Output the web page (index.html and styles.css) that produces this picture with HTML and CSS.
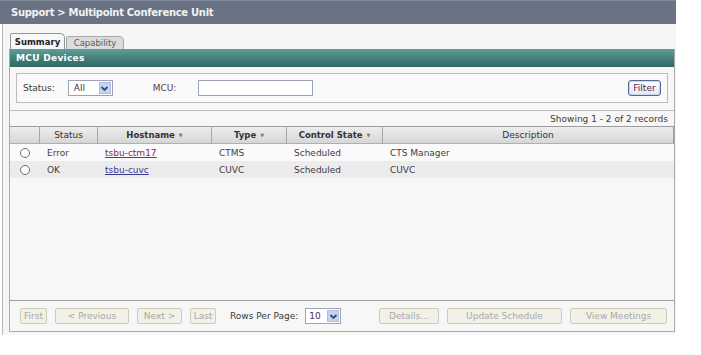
FILE: index.html
```html
<!DOCTYPE html>
<html>
<head>
<meta charset="utf-8">
<link rel="stylesheet" href="styles.css">
</head>
<body>
<div class="page">
  <div class="titlebar">Support &gt; Multipoint Conference Unit</div>
  <div class="content">
    <div class="tabs">
      <div class="tab active">Summary</div>
      <div class="tab">Capability</div>
    </div>
    <div class="panel">
      <div class="panel-head">MCU Devices</div>
      <div class="filter-wrap">
        <div class="filter">
          <span class="lbl">Status:</span>
          <div class="select status-sel"><span class="sel-text">All</span><span class="sel-btn"><svg width="9" height="7" viewBox="0 0 9 7"><path d="M1.5 2 L4.5 5 L7.5 2" fill="none" stroke="#2b4a8a" stroke-width="1.8"/></svg></span></div>
          <span class="lbl mcu">MCU:</span>
          <div class="textbox"></div>
          <span class="spacer"></span>
          <div class="btn-filter">Filter</div>
        </div>
      </div>
      <div class="showing">Showing 1 - 2 of 2 records</div>
      <div class="table">
        <div class="row head">
          <div class="c c0"></div>
          <div class="c c1 center">Status</div>
          <div class="c c2 center b">Hostname <span class="arr">&#9660;</span></div>
          <div class="c c3 center b">Type <span class="arr">&#9660;</span></div>
          <div class="c c4 center b">Control State <span class="arr">&#9660;</span></div>
          <div class="c c5 center">Description</div>
        </div>
        <div class="row odd">
          <div class="c c0"><span class="radio"></span></div>
          <div class="c c1">Error</div>
          <div class="c c2"><span class="link l1">tsbu-ctm17</span></div>
          <div class="c c3">CTMS</div>
          <div class="c c4">Scheduled</div>
          <div class="c c5">CTS Manager</div>
        </div>
        <div class="row even">
          <div class="c c0"><span class="radio"></span></div>
          <div class="c c1">OK</div>
          <div class="c c2"><span class="link l2">tsbu-cuvc</span></div>
          <div class="c c3">CUVC</div>
          <div class="c c4">Scheduled</div>
          <div class="c c5">CUVC</div>
        </div>
      </div>
      <div class="pager">
        <div class="dbtn w-first">First</div>
        <div class="dbtn w-prev">&lt; Previous</div>
        <div class="dbtn w-next">Next &gt;</div>
        <div class="dbtn w-last">Last</div>
        <span class="rpp">Rows Per Page:</span>
        <div class="select rows-sel"><span class="sel-text">10</span><span class="sel-btn"><svg width="9" height="7" viewBox="0 0 9 7"><path d="M1.5 2 L4.5 5 L7.5 2" fill="none" stroke="#2b4a8a" stroke-width="1.8"/></svg></span></div>
        <span class="spacer"></span>
        <div class="dbtn w-det">Details...</div>
        <div class="dbtn w-upd">Update Schedule</div>
        <div class="dbtn w-view">View Meetings</div>
      </div>
    </div>
  </div>
</div>
</body>
</html>
```
FILE: styles.css
```css
* { box-sizing: border-box; }
body {
  margin: 0;
  background: #ffffff;
  font-family: "DejaVu Sans", Verdana, sans-serif;
  font-size: 9px;
  color: #433a48;
}
.page {
  width: 676px;
  height: 335px;
  display: flex;
  flex-direction: column;
}
.titlebar {
  height: 24px;
  background: #6a7384;
  border-top: 1px solid #808a99;
  color: #f2f2f2;
  font-weight: bold;
  font-size: 10px;
  letter-spacing: -0.3px;
  padding-left: 11px;
  display: flex;
  align-items: center;
}
.content {
  flex: 1;
  margin-left: 2px;
  border-left: 1px solid #b8b8b8;
  background: #f6f6f6;
  padding: 9px 1px 0 6px;
  display: flex;
  flex-direction: column;
}
.tabs {
  display: flex;
  align-items: flex-end;
  height: 16px;
  padding-left: 1px;
}
.tab {
  height: 13px;
  width: 58px;
  margin-left: 1px;
  border: 1px solid #a9a9a9;
  border-bottom: none;
  border-radius: 2px 5px 0 0;
  background: #dcdcdc;
  color: #5a5a5a;
  font-size: 8.5px;
  display: flex;
  align-items: center;
  justify-content: center;
}
.tab.active {
  height: 16px;
  width: 55px;
  margin-left: 0;
  background: #f8f8f8;
  color: #222;
  font-weight: bold;
  border-color: #8a9a98;
}
.panel {
  height: 283px;
  border: 1px solid #a9a9a9;
  border-top: none;
  display: flex;
  flex-direction: column;
  background: #f7f7f7;
}
.panel-head {
  height: 18px;
  background: linear-gradient(#629e99, #3f7c77 60%, #2f6a66);
  color: #ffffff;
  font-weight: bold;
  font-size: 9px;
  letter-spacing: 0.3px;
  padding-left: 6px;
  display: flex;
  align-items: center;
}
.filter-wrap {
  padding: 6px 6px 7px 6px;
  border-bottom: 1px solid #bdbdbd;
}
.filter {
  height: 30px;
  border: 1px solid #bcbcbc;
  background: #f9f9f9;
  display: flex;
  align-items: center;
  padding: 0 6px 0 6px;
}
.lbl { color: #3a3a3a; }
.mcu { margin-left: 40px; margin-right: 22px; color: #5a3a5a; }
.select {
  height: 16px;
  border: 1px solid #9aa4b4;
  background: #fff;
  display: flex;
  align-items: center;
  justify-content: space-between;
  padding: 0 1px 0 5px;
}
.status-sel { width: 45px; margin-left: 13px; }
.sel-text { color: #4a2a5a; }
.sel-btn {
  width: 12px;
  height: 12px;
  background: #c6d5ef;
  border: 1px solid #aebddb;
  display: flex;
  align-items: center;
  justify-content: center;
}
.textbox {
  width: 115px;
  height: 16px;
  border: 1px solid #9aa4b4;
  background: #fff;
}
.spacer { flex: 1; }
.btn-filter {
  height: 16px;
  width: 33px;
  border: 1px solid #4d6a9a;
  border-radius: 3px;
  background: linear-gradient(#ffffff, #e4e8f0);
  box-shadow: inset 0 0 0 1px #c9d6ec;
  color: #4a2a5a;
  display: flex;
  align-items: center;
  justify-content: center;
}
.showing {
  height: 15px;
  display: flex;
  align-items: center;
  justify-content: flex-end;
  padding-right: 6px;
  color: #3a3a3a;
}
.table {
  flex: 1;
  display: flex;
  flex-direction: column;
}
.row {
  display: grid;
  grid-template-columns: 30px 58px 114px 75px 96px 1fr;
  height: 17px;
}
.row.head {
  height: 18px;
  background: linear-gradient(#eeeeee, #d6d6d6);
  border-top: 1px solid #9c9c9c;
  border-bottom: 1px solid #b0b0b0;
  color: #333;
}
.row.head .c {
  border-right: 1px solid #a8a8a8;
  justify-content: center;
  padding-left: 0;
}
.row.head .c5 { border-right: 1px solid #9c9c9c; }
.c {
  display: flex;
  align-items: center;
  padding-left: 7px;
  white-space: nowrap;
}
.c.b { font-weight: bold; font-size: 8.5px; }
.arr { font-size: 5px; color: #777; margin-left: 4px; font-weight: normal; }
.row.odd { background: #fafafa; }
.row.even { background: #ececec; }
.row .c0 { justify-content: center; padding-left: 0; }
.radio {
  width: 10px;
  height: 10px;
  border: 1px solid #6f6f6f;
  border-radius: 50%;
  background: #fff;
}
.link { text-decoration: underline; }
.l1 { color: #8a2a5c; }
.l2 { color: #3b3a8e; }
.pager {
  height: 31px;
  border-top: 1px solid #9e9e9e;
  display: flex;
  align-items: center;
  padding: 0 7px 0 10px;
}
.dbtn {
  height: 16px;
  border: 1px solid #cfcbb7;
  border-radius: 2px;
  background: #f1f1e7;
  color: #a8a8a8;
  display: flex;
  align-items: center;
  justify-content: center;
  margin-right: 8px;
}
.w-first { width: 27px; }
.w-prev { width: 74px; }
.w-next { width: 45px; }
.w-last { width: 26px; margin-right: 14px; }
.rpp { color: #3a3a3a; margin-right: 7px; }
.rows-sel { width: 36px; padding-left: 3px; }
.w-det { width: 60px; }
.w-upd { width: 115px; }
.w-view { width: 97px; margin-right: 0; }
```
